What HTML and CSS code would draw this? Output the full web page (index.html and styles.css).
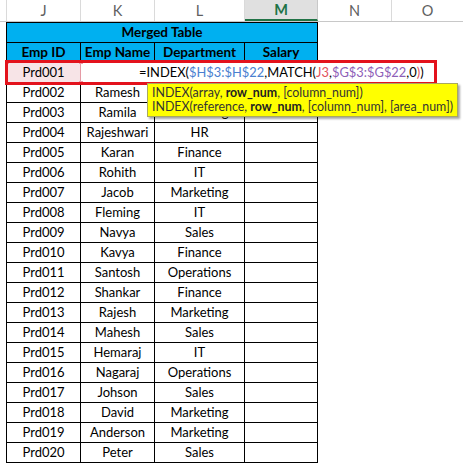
FILE: index.html
```html
<!DOCTYPE html>
<html>
<head>
<meta charset="utf-8">
<link rel="stylesheet" href="styles.css">
</head>
<body>
<div class="sheet">
  <div class="colheads">
    <div class="ch rh"></div>
    <div class="ch cj">J</div>
    <div class="ch ck">K</div>
    <div class="ch cl">L</div>
    <div class="ch cm sel">M</div>
    <div class="ch cn">N</div>
    <div class="ch co">O</div>
  </div>
  <div class="grid">
    <div class="c blue title">Merged Table</div>
    <div class="c blue">Emp ID</div>
    <div class="c blue">Emp Name</div>
    <div class="c blue">Department</div>
    <div class="c blue">Salary</div>

    <div class="c ref">Prd001<span class="h h1"></span><span class="h h2"></span><span class="h h3"></span></div>
    <div class="c edit"><span class="f">=INDEX(<span class="fb">$H$3:$H$22</span>,MATCH(<span class="fr">J3</span>,<span class="fp">$G$3:$G$22</span>,0<span class="fr">)</span>)</span></div>

    <div class="c">Prd002</div><div class="c">Ramesh</div><div class="c"></div><div class="c"></div>
    <div class="c">Prd003</div><div class="c">Ramila</div><div class="c">Marketing</div><div class="c"></div>
    <div class="c">Prd004</div><div class="c">Rajeshwari</div><div class="c">HR</div><div class="c"></div>
    <div class="c">Prd005</div><div class="c">Karan</div><div class="c">Finance</div><div class="c"></div>
    <div class="c">Prd006</div><div class="c">Rohith</div><div class="c">IT</div><div class="c"></div>
    <div class="c">Prd007</div><div class="c">Jacob</div><div class="c">Marketing</div><div class="c"></div>
    <div class="c">Prd008</div><div class="c">Fleming</div><div class="c">IT</div><div class="c"></div>
    <div class="c">Prd009</div><div class="c">Navya</div><div class="c">Sales</div><div class="c"></div>
    <div class="c">Prd010</div><div class="c">Kavya</div><div class="c">Finance</div><div class="c"></div>
    <div class="c">Prd011</div><div class="c">Santosh</div><div class="c">Operations</div><div class="c"></div>
    <div class="c">Prd012</div><div class="c">Shankar</div><div class="c">Finance</div><div class="c"></div>
    <div class="c">Prd013</div><div class="c">Rajesh</div><div class="c">Marketing</div><div class="c"></div>
    <div class="c">Prd014</div><div class="c">Mahesh</div><div class="c">Sales</div><div class="c"></div>
    <div class="c">Prd015</div><div class="c">Hemaraj</div><div class="c">IT</div><div class="c"></div>
    <div class="c">Prd016</div><div class="c">Nagaraj</div><div class="c">Operations</div><div class="c"></div>
    <div class="c">Prd017</div><div class="c">Johson</div><div class="c">Sales</div><div class="c"></div>
    <div class="c">Prd018</div><div class="c">David</div><div class="c">Marketing</div><div class="c"></div>
    <div class="c">Prd019</div><div class="c">Anderson</div><div class="c">Marketing</div><div class="c"></div>
    <div class="c">Prd020</div><div class="c">Peter</div><div class="c">Sales</div><div class="c"></div>
  </div>
  <div class="redbox"></div>
  <div class="tip">
    <div>INDEX(array, <b>row_num</b>, [column_num])</div>
    <div>INDEX(reference, <b>row_num</b>, [column_num], [area_num])</div>
  </div>
</div>
</body>
</html>
```
FILE: styles.css
```css
* { box-sizing: border-box; }
html, body { margin: 0; padding: 0; background: #fff; }
body { font-family: Lato, "Liberation Sans", sans-serif; color: #000; }
.sheet { position: relative; width: 463px; height: 467px; overflow: hidden; }

.colheads { display: flex; height: 22px; border-bottom: 1px solid #c8c8c8; }
.ch {
  height: 21px; border-right: 1px solid #dadada;
  display: flex; align-items: center; justify-content: center;
  font-size: 14.5px; color: #5f5f5f;
}
.rh { width: 7px; }
.cj, .ck, .cn { width: 74px; }
.cl { width: 90px; }
.cm { width: 73px; }
.co { flex: 1; border-right: none; }
.sel { background: #e0e0e0; color: #217346; font-weight: bold; border-bottom: 2px solid #217346; border-right-color: #c8c8c8; }

.grid {
  display: grid;
  grid-template-columns: 74px 74px 90px 73px;
  grid-auto-rows: 20px;
  width: fit-content;
  margin-left: 6px;
  border-left: 1px solid #000;
  border-top: 1px solid #000;
}
.c {
  border-right: 1px solid #000; border-bottom: 1px solid #000;
  display: flex; align-items: flex-end; justify-content: center;
  padding-bottom: 3px; font-size: 13px; line-height: 1; white-space: nowrap;
}
.blue { background: #00b0f0; font-weight: bold; font-size: 13.5px; }
.title { grid-column: span 4; }
.ref { background: #f7e4e7; border-right-color: #e59aa5; position: relative; }
.h { position: absolute; width: 4px; height: 4px; background: #ec9aa6; }
.h1 { left: -2px; top: -3px; }
.h2 { right: -3px; top: -3px; }
.h3 { right: -3px; bottom: -3px; }
.edit {
  grid-column: span 3; justify-content: flex-start; padding-left: 58px;
  overflow: visible; border-right-color: transparent; position: relative; z-index: 1;
  font-size: 12.9px;
}
.f { background: #fff; }
.fb { color: #4a7fd0; }
.fr { color: #e2525c; }
.fp { color: #8e5fb8; }

.redbox {
  position: absolute; left: 5px; top: 60px; width: 432px; height: 25px;
  border: 3px solid #e3121c; z-index: 2;
}
.tip {
  position: absolute; left: 147px; top: 83px; width: 311px; height: 34px;
  background: #ffff00; border: 1px solid #a8a860;
  box-shadow: 2px 2px 2px rgba(0,0,0,0.35);
  padding: 2px 0 0 4px; font-size: 12.4px; line-height: 14px; color: #333; z-index: 3;
}
.tip b { color: #222; }
```
